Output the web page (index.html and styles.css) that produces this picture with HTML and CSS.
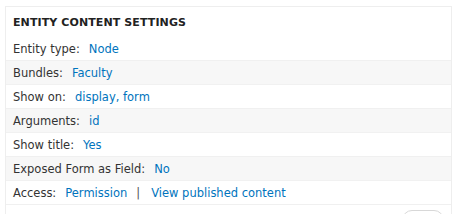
FILE: index.html
```html
<!DOCTYPE html>
<html>
<head>
<meta charset="utf-8">
<link rel="stylesheet" href="styles.css">
</head>
<body>
<div class="box">
  <div class="title">ENTITY CONTENT SETTINGS</div>
  <div class="row"><span class="label">Entity type:</span><a class="val">Node</a></div>
  <div class="row alt"><span class="label">Bundles:</span><a class="val">Faculty</a></div>
  <div class="row"><span class="label">Show on:</span><a class="val">display, form</a></div>
  <div class="row alt"><span class="label">Arguments:</span><a class="val">id</a></div>
  <div class="row"><span class="label">Show title:</span><a class="val">Yes</a></div>
  <div class="row alt"><span class="label">Exposed Form as Field:</span><a class="val">No</a></div>
  <div class="row"><span class="label">Access:</span><a class="val">Permission</a><span class="sep">|</span><a class="val2">View published content</a></div>
  <div class="footer"><span class="btn"></span></div>
</div>
</body>
</html>
```
FILE: styles.css
```css
html, body { margin: 0; padding: 0; background: #fff; overflow: hidden; }
body { font-family: "DejaVu Sans", Verdana, sans-serif; font-size: 11.5px; color: #333; }
.box {
  margin: 6px 0 0 5px;
  width: 445px;
  border: 1px solid #eee;
  border-bottom: none;
  height: 207px;
  overflow: hidden;
}
.title {
  height: 30px;
  display: flex;
  align-items: center;
  padding-left: 7px;
  font-weight: bold;
  font-size: 11px;
  color: #222;
  letter-spacing: 0.1px;
}
.row {
  height: 23px;
  border-bottom: 1px solid #f0f0f0;
  display: flex;
  align-items: center;
  padding-left: 7px;
}
.row.alt { background: #f7f7f7; border-bottom-color: #f1f1f1; }
.row:first-of-type { border-bottom: none; height: 24px; }
.label { color: #333; }
.val { color: #0074bd; margin-left: 9px; }
.sep { color: #555; margin-left: 9px; }
.val2 { color: #0074bd; margin-left: 11px; }
.footer { display: flex; justify-content: flex-end; padding: 5px 7px 0 0; }
.btn {
  width: 40px; height: 20px;
  border: 1px solid #d8d8d8;
  border-radius: 10px;
  flex: none;
}
```
